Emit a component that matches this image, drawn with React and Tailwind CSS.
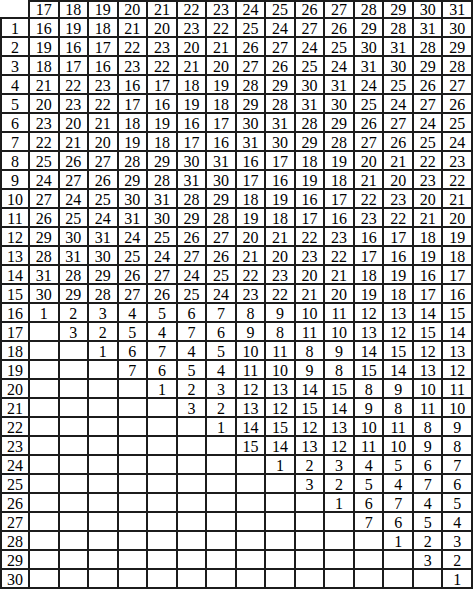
import React from 'react';

const cols = Array.from({ length: 15 }, (_, i) => 17 + i);
const rows = Array.from({ length: 30 }, (_, i) => 1 + i);

function Cell({ children, className = '' }) {
  return (
    <div className={`h-[19px] flex items-center justify-center border-[#1c1c1c] border-r-2 border-b-2 ${className}`}>
      {children}
    </div>
  );
}

export default function App() {
  return (
    <div
      className="w-[473px] bg-white text-black text-[16px] leading-none"
      style={{ fontFamily: '"Liberation Serif", "Times New Roman", serif' }}
    >
      <div className="grid grid-cols-[30px_repeat(15,minmax(0,1fr))]">
        <div className="h-[19px] border-[#1c1c1c] border-r-2 border-b-2" />
        {cols.map((c) => (
          <Cell key={'h' + c} className="border-t-2 pt-[1px]">{c}</Cell>
        ))}
        {rows.map((r) => (
          <React.Fragment key={r}>
            <Cell className="border-l-2 pt-[2px]">{r}</Cell>
            {cols.map((c) => (
              <Cell key={c} className="pt-[2px]">{r < c ? r ^ c : ''}</Cell>
            ))}
          </React.Fragment>
        ))}
      </div>
    </div>
  );
}
